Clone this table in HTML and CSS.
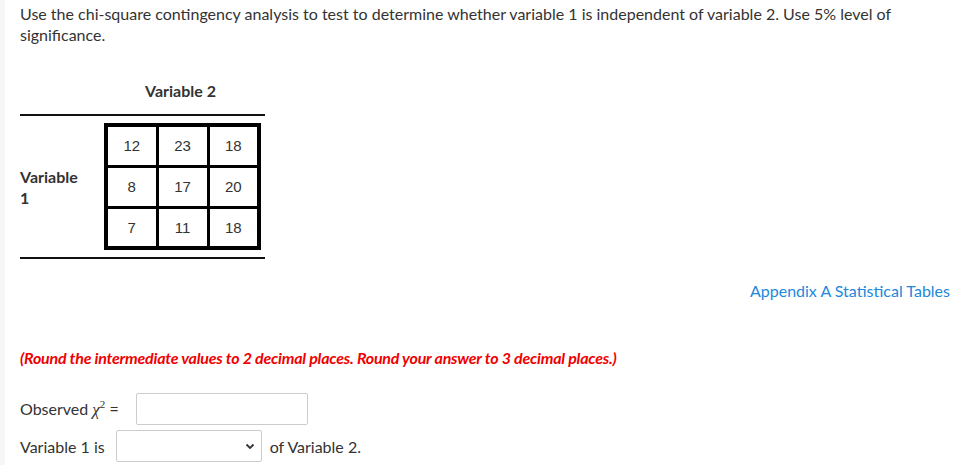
FILE: index.html
```html
<!DOCTYPE html>
<html lang="en">
<head>
<meta charset="utf-8">
<title>Chi-square contingency</title>
<link rel="stylesheet" href="styles.css">
</head>
<body>
<div class="page">
  <p class="prompt">Use the chi-square contingency analysis to test to determine whether variable 1 is independent of variable 2. Use 5% level of significance.</p>

  <div class="ct">
    <div class="ct-head">Variable 2</div>
    <div class="ct-body">
      <div class="ct-label">Variable<br>1</div>
      <table class="data">
        <tr><td>12</td><td>23</td><td>18</td></tr>
        <tr><td>8</td><td>17</td><td>20</td></tr>
        <tr><td>7</td><td>11</td><td>18</td></tr>
      </table>
    </div>
  </div>

  <div class="appendix"><a href="#">Appendix A Statistical Tables</a></div>

  <p class="note">(Round the intermediate values to 2 decimal places. Round your answer to 3 decimal places.)</p>

  <div class="answer">
    <div class="row">
      <span class="lbl">Observed <span class="chi">χ<sup>2</sup></span> =</span>
      <input class="num" type="text">
    </div>
    <div class="row">
      <span class="lbl">Variable 1 is</span>
      <span class="select">
        <svg width="10" height="7" viewBox="0 0 10 7"><path d="M1.5 1.5 L5 5 L8.5 1.5" fill="none" stroke="#333" stroke-width="1.8"/></svg>
      </span>
      <span class="after">of Variable 2.</span>
    </div>
  </div>
</div>
</body>
</html>
```

FILE: styles.css
```css
* { box-sizing: border-box; }
html, body { margin: 0; padding: 0; background: #fff; }
body {
  font-family: Lato, "Open Sans", sans-serif;
  font-size: 16px;
  color: #333;
}
.page {
  border-left: 5px solid #f6f6f6;
  padding: 3px 9px 0 15px;
  min-height: 465px;
}
.prompt {
  margin: 0;
  line-height: 21px;
}
.ct {
  width: 245px;
  margin-top: 36px;
}
.ct-head {
  font-weight: bold;
  text-align: center;
  padding-left: 76px;
  line-height: 20px;
  padding-bottom: 13px;
  border-bottom: 2px solid #111;
}
.ct-body {
  display: flex;
  align-items: center;
  padding: 7px 0 7px 0;
  border-bottom: 2px solid #111;
}
.ct-label {
  width: 84px;
  font-weight: bold;
  line-height: 21px;
}
.data {
  border-collapse: collapse;
  border: 4px solid #000;
}
.data td {
  border: 3px solid #000;
  width: 51px;
  height: 41px;
  text-align: center;
  font-family: "Liberation Sans", Arial, sans-serif;
  font-size: 15px;
  color: #333;
  padding: 0;
}
.appendix {
  text-align: right;
  margin-top: 22px;
  line-height: 20px;
}
.appendix a {
  color: #2188dc;
  text-decoration: none;
}
.note {
  margin: 47px 0 0 0;
  color: #f00000;
  font-weight: bold;
  font-style: italic;
  letter-spacing: -0.22px;
  line-height: 20px;
}
.answer {
  margin-top: 25px;
  display: flex;
  flex-direction: column;
  gap: 5px;
}
.row {
  display: flex;
  align-items: center;
}
.chi {
  font-family: "Liberation Serif", serif;
  font-style: italic;
  font-size: 17px;
}
.chi sup {
  font-style: normal;
  font-size: 11px;
}
.num {
  width: 172px;
  height: 32px;
  border: 1px solid #ccc;
  border-radius: 2px;
  margin-left: 17px;
}
.select {
  width: 146px;
  height: 32px;
  border: 1px solid #ccc;
  border-radius: 2px;
  display: flex;
  align-items: center;
  justify-content: flex-end;
  padding-right: 6px;
  margin-left: 11px;
}
.after {
  margin-left: 8px;
}
```
